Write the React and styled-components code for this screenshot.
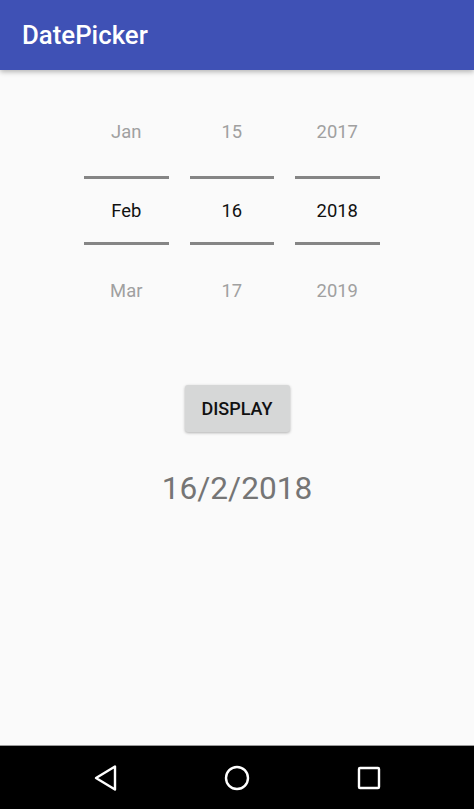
import React from 'react';
import styled, { createGlobalStyle } from 'styled-components';

const GlobalStyle = createGlobalStyle`
  html, body {
    margin: 0;
    padding: 0;
    background: #fafafa;
    font-family: Roboto, "Noto Sans", sans-serif;
  }
`;

const wheels = [
  ['Jan', 'Feb', 'Mar'],
  ['15', '16', '17'],
  ['2017', '2018', '2019'],
];

export default function App() {
  return (
    <S_Screen>
      <GlobalStyle />
      <S_AppBar>
        <S_Title>DatePicker</S_Title>
      </S_AppBar>
      <S_Content>
        <S_Picker>
          {wheels.map(([prev, current, next]) => (
            <S_Wheel key={current}>
              <S_Option>{prev}</S_Option>
              <S_Option $selected>{current}</S_Option>
              <S_Option>{next}</S_Option>
            </S_Wheel>
          ))}
        </S_Picker>
        <S_Button>Display</S_Button>
        <S_Result>16/2/2018</S_Result>
      </S_Content>
      <S_NavBar>
        <S_NavIcon viewBox="0 0 26 26">
          <path d="M4 13 L23 1.5 V24.5 Z" />
        </S_NavIcon>
        <S_NavIcon viewBox="0 0 26 26">
          <circle cx="13" cy="13" r="11" />
        </S_NavIcon>
        <S_NavIcon viewBox="0 0 26 26">
          <rect x="3" y="3" width="20" height="20" rx="1" />
        </S_NavIcon>
      </S_NavBar>
    </S_Screen>
  );
}

const S_Screen = styled.div`
  width: 474px;
  height: 809px;
  display: flex;
  flex-direction: column;
  overflow: hidden;
`;

const S_AppBar = styled.header`
  height: 70px;
  flex-shrink: 0;
  display: flex;
  align-items: center;
  padding-left: 22px;
  background: #3f51b5;
  box-shadow: 0 2px 5px rgba(0, 0, 0, 0.28);
  position: relative;
`;

const S_Title = styled.h1`
  margin: 0;
  color: #fff;
  font-size: 25.8px;
  font-weight: 500;
`;

const S_Content = styled.main`
  flex: 1;
  display: flex;
  flex-direction: column;
  align-items: center;
  padding-top: 18px;
  background: #fafafa;
`;

const S_Picker = styled.div`
  align-self: flex-start;
  margin-left: 84px;
  display: flex;
  gap: 21px;
`;

const S_Wheel = styled.div`
  width: 84.5px;
  display: grid;
  grid-template-rows: 87px 70px 91px;
`;

const S_Option = styled.div`
  display: flex;
  align-items: center;
  justify-content: center;
  font-size: 18.4px;
  color: ${({ $selected }) => ($selected ? '#111' : '#a0a0a0')};
  ${({ $selected }) => $selected && 'margin-top: 1px; border-top: 3px solid #858585; border-bottom: 3px solid #858585;'}
`;

const S_Button = styled.button`
  margin-top: 49px;
  width: 105px;
  height: 47px;
  padding: 0;
  border: 0;
  border-radius: 3px;
  background: #d6d7d7;
  box-shadow: 0 1px 3px rgba(0, 0, 0, 0.3);
  color: #111;
  font-family: inherit;
  font-size: 18px;
  font-weight: 500;
  text-transform: uppercase;
`;

const S_Result = styled.div`
  margin-top: 37px;
  color: #757575;
  font-size: 31.6px;
  line-height: 40px;
`;

const S_NavBar = styled.nav`
  height: 64px;
  flex-shrink: 0;
  display: flex;
  align-items: center;
  justify-content: center;
  gap: 106px;
  background: #000;
  border-top: 1px solid #9a9a9a;
  box-sizing: border-box;
`;

const S_NavIcon = styled.svg`
  width: 26px;
  height: 26px;
  fill: none;
  stroke: #fff;
  stroke-width: 2.4;
  stroke-linejoin: round;
`;
